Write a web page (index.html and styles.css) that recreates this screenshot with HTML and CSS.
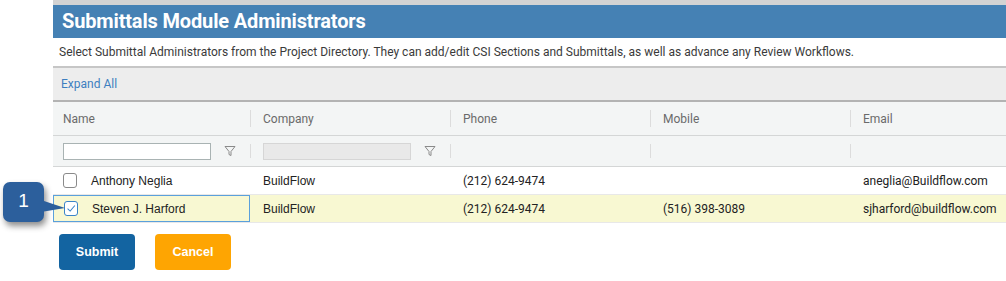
FILE: index.html
```html
<!DOCTYPE html>
<html>
<head>
<meta charset="utf-8">
<link rel="stylesheet" href="styles.css">
</head>
<body>
<div class="page">
  <div class="panel">
    <div class="topstrip"></div>
    <div class="titlebar">Submittals Module Administrators</div>
    <div class="desc">Select Submittal Administrators from the Project Directory. They can add/edit CSI Sections and Submittals, as well as advance any Review Workflows.</div>
    <div class="toolbar"><a class="expand">Expand All</a></div>
    <div class="grid">
      <div class="row head">
        <div class="cell">Name</div>
        <div class="cell sep">Company</div>
        <div class="cell sep">Phone</div>
        <div class="cell sep">Mobile</div>
        <div class="cell sep">Email</div>
      </div>
      <div class="row filter">
        <div class="cell fcell"><span class="finput"></span><svg class="ficon" viewBox="0 0 12 12"><path d="M1 1.5 H11 L7 6.5 V10.5 L5 9.5 V6.5 Z" fill="none" stroke="#8a8a8a" stroke-width="1"/></svg></div>
        <div class="cell fcell sep"><span class="finput dis"></span><svg class="ficon" viewBox="0 0 12 12"><path d="M1 1.5 H11 L7 6.5 V10.5 L5 9.5 V6.5 Z" fill="none" stroke="#8a8a8a" stroke-width="1"/></svg></div>
        <div class="cell sep"></div>
        <div class="cell sep"></div>
        <div class="cell sep"></div>
      </div>
      <div class="row data">
        <div class="cell name"><span class="cb"></span>Anthony Neglia</div>
        <div class="cell arial">BuildFlow</div>
        <div class="cell">(212) 624-9474</div>
        <div class="cell"></div>
        <div class="cell">aneglia@Buildflow.com</div>
      </div>
      <div class="row data sel">
        <div class="cell name focus"><span class="cb on"><svg viewBox="0 0 14 14"><path d="M3 7.2 L6 10 L11.5 3.5" fill="none" stroke="#3a84c9" stroke-width="1.2"/></svg></span>Steven J. Harford</div>
        <div class="cell arial">BuildFlow</div>
        <div class="cell">(212) 624-9474</div>
        <div class="cell">(516) 398-3089</div>
        <div class="cell">sjharford@buildflow.com</div>
      </div>
    </div>
    <div class="actions">
      <button class="btn submit">Submit</button>
      <button class="btn cancel">Cancel</button>
    </div>
  </div>
  <div class="callout"><span>1</span><svg class="pointer" viewBox="0 0 24 14"><path d="M0 0 L24 8 L0 12 Z" fill="#2c5f9c"/></svg></div>
</div>
</body>
</html>
```
FILE: styles.css
```css
* { box-sizing: border-box; }
html, body { margin: 0; padding: 0; background: #fff; }
body { font-family: Roboto, "Liberation Sans", sans-serif; color: #333; width: 1006px; height: 281px; overflow: hidden; }
.page { position: relative; }
.panel { margin-left: 53px; }
.topstrip { height: 5px; background: #d3d3d3; }
.titlebar {
  height: 33px; background: #4581b4; color: #fff;
  font-family: Roboto, sans-serif; font-weight: 700; font-size: 20px;
  padding-left: 9px; line-height: 32px; letter-spacing: -0.15px;
}
.desc {
  height: 30px; font-size: 12px; color: #3a3a3a; padding-left: 6px; line-height: 28px;
  border-bottom: 2px solid #c6c6c6;
}
.toolbar {
  height: 34px; background: #ededed; border-bottom: 2px solid #b3b3b3;
  padding-left: 8px; line-height: 32px; font-size: 12px;
}
.expand { color: #3d7fc0; }
.row { display: grid; grid-template-columns: 197px 200px 200px 200px 1fr; }
.cell { padding-left: 13px; font-size: 12px; display: flex; align-items: center; white-space: nowrap; }
.row > .cell:first-child { padding-left: 10px; }
.head, .filter { background: #f3f5f5; }
.head { height: 34px; color: #6a6a6a; border-bottom: 1px solid #d4d6d6; }
.filter { height: 31px; border-bottom: 1px solid #d4d6d6; }
.sep { position: relative; }
.sep::before { content: ""; position: absolute; left: 0; top: 8px; bottom: 8px; width: 1px; background: #dcdcdc; }
.finput { width: 148px; height: 17px; border: 1px solid #a9b3b3; background: #fff; display: inline-block; }
.finput.dis { background: #e9e9e9; border-color: #d6d6d6; }
.ficon { width: 12px; height: 12px; margin-left: 13px; }
.data { height: 28px; color: #222; border-bottom: 1px solid #e8e8e8; }
.data .cell { font-size: 12px; }
.name, .arial { font-family: "Liberation Sans", Arial, sans-serif; }
.name .cb { width: 14px; height: 15px; border: 1px solid #8a8a8a; border-radius: 3px; margin-right: 14px; background: #fff; display: inline-flex; }
.name .cb.on { border-color: #3a84c9; }
.cb svg { width: 100%; height: 100%; }
.sel { background: #f8f8d2; }
.focus { border: 1px solid #5aa0dc; }
.actions { padding: 11px 0 0 6px; display: flex; gap: 20px; }
.btn {
  width: 76px; height: 36px; border: none; border-radius: 4px; color: #fff;
  font-family: "Liberation Sans", Arial, sans-serif; font-weight: 700; font-size: 12.5px;
}
.submit { background: #1364a1; }
.cancel { background: #fea502; }
.callout {
  position: absolute; left: 3px; top: 182px; width: 41px; height: 40px;
  background: #2c5f9c; border-radius: 7px; color: #fff;
  font-family: "Liberation Sans", Arial, sans-serif; font-size: 19px;
  display: flex; align-items: center; justify-content: center;
  box-shadow: 2px 4px 6px rgba(0,0,0,0.45);
}
.callout span { margin-top: -2px; }
.pointer { position: absolute; left: 38px; top: 18px; width: 24px; height: 14px; }
```
